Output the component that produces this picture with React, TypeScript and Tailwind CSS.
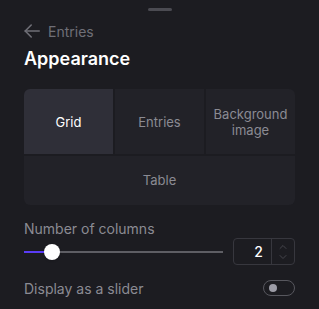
import React, { useState } from 'react';
import { ChevronUp, ChevronDown } from 'lucide-react';

const layouts = ['Grid', 'Entries', 'Background image'];

function BackArrow() {
  return (
    <svg width="16" height="14" viewBox="0 0 16 14" fill="none" stroke="currentColor" strokeWidth="1.6" strokeLinecap="round" strokeLinejoin="round">
      <path d="M1.2 7H15.2" />
      <path d="M7.2 1L1.2 7L7.2 13" />
    </svg>
  );
}

export default function App() {
  const [layout, setLayout] = useState('Grid');
  const [columns, setColumns] = useState(2);
  const [asSlider, setAsSlider] = useState(false);

  // track is 200px wide; thumb centre sits 28px in at 2 columns
  const thumbCenter = 28 + (columns - 2) * 17;

  return (
    <div
      className="w-[319px] h-[309px] bg-[#1c1c21] px-6 overflow-hidden"
      style={{ fontFamily: 'Inter, "Noto Sans", sans-serif' }}
    >
      {/* Drag handle */}
      <div className="pt-2 flex justify-center">
        <div className="w-6 h-[3px] rounded-full bg-[#4b4b52]" />
      </div>

      {/* Back link */}
      <button className="mt-[10px] flex items-center gap-2 h-5 text-[14px] text-[#6f6f77]">
        <BackArrow />
        <span>Entries</span>
      </button>

      <h1 className="mt-[4px] text-[18px] leading-7 font-semibold text-white">Appearance</h1>

      {/* Layout picker */}
      <div className="mt-4 grid grid-cols-3 gap-[2px] rounded-md overflow-hidden">
        {layouts.map((l) => (
          <button
            key={l}
            onClick={() => setLayout(l)}
            className={`h-[65px] px-2 text-[13px] leading-4 flex items-center justify-center text-center ${
              layout === l ? 'bg-[#2f2f38] text-white' : 'bg-[#222228] text-[#8b8b93]'
            }`}
          >
            {l}
          </button>
        ))}
        <button
          onClick={() => setLayout('Table')}
          className={`col-span-3 h-[49px] text-[13px] flex items-center justify-center ${
            layout === 'Table' ? 'bg-[#2f2f38] text-white' : 'bg-[#222228] text-[#8b8b93]'
          }`}
        >
          Table
        </button>
      </div>

      {/* Number of columns */}
      <div className="mt-[14px] text-[14px] leading-[19px] text-[#8b8b93]">Number of columns</div>
      <div className="flex items-center gap-[10px]">
        <div className="relative flex-1 h-4">
          <div className="absolute left-0 right-0 top-1/2 -translate-y-1/2 h-[2px] bg-[#5e5e64]" />
          <div
            className="absolute left-0 top-1/2 -translate-y-1/2 h-[2px] bg-[#5a3cf6]"
            style={{ width: `${thumbCenter - 8}px` }}
          />
          <div
            className="absolute top-0 w-4 h-4 rounded-full bg-white shadow"
            style={{ left: `${thumbCenter - 8}px` }}
          />
        </div>
        <div className="flex w-[62px] h-[27px] rounded-[4px] border border-[#37373e]">
          <div className="flex-1 flex items-center justify-end pr-[8px] text-[14px] font-medium text-white">
            {columns}
          </div>
          <div className="w-[23px] border-l border-[#37373e] flex flex-col items-center justify-center text-[#45454c]">
            <ChevronUp className="w-3 h-3 -mb-[1px]" onClick={() => setColumns((c) => c + 1)} />
            <ChevronDown className="w-3 h-3 -mt-[1px]" onClick={() => setColumns((c) => Math.max(1, c - 1))} />
          </div>
        </div>
      </div>

      {/* Display as a slider */}
      <div className="mt-[13px] flex items-center justify-between h-5">
        <span className="text-[14px] text-[#8b8b93]">Display as a slider</span>
        <button
          onClick={() => setAsSlider(!asSlider)}
          className="w-8 h-4 rounded-full border border-[#57575e] flex items-center px-[5px]"
        >
          <span className="w-2 h-2 rounded-full bg-[#9c9ca6]" />
        </button>
      </div>
    </div>
  );
}
